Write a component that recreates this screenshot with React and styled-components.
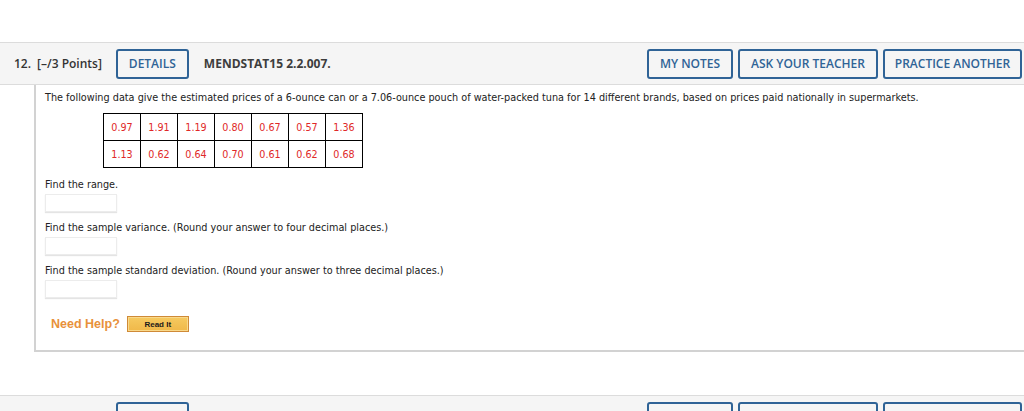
import React from "react";
import styled, { createGlobalStyle } from "styled-components";

const Global = createGlobalStyle`
  body {
    margin: 0;
    background: #fff;
    font-family: "DejaVu Sans", Verdana, sans-serif;
  }
`;

const Page = styled.div`
  width: 1024px;
  height: 411px;
  overflow: hidden;
  padding-top: 42px;
  box-sizing: border-box;
`;

const Header = styled.div`
  display: flex;
  align-items: center;
  height: 41px;
  padding: 0 2px 0 14px;
  background: #f5f5f5;
  border-top: 1px solid #dcdcdc;
  border-bottom: 1px solid #dcdcdc;
  font-family: "Open Sans", sans-serif;
  font-size: 12px;
  font-weight: 600;
  color: #333;
`;

const Num = styled.span`
  margin-right: 6px;
`;

const Points = styled.span`
  margin-right: 14px;
`;

const Code = styled.span`
  margin-left: 15px;
  color: #3d3d3d;
  font-weight: 700;
`;

const Spacer = styled.div`
  flex: 1;
`;

const Button = styled.button`
  box-sizing: border-box;
  height: 30px;
  width: ${(p) => p.$w}px;
  margin-left: ${(p) => p.$ml || 0}px;
  border: 2px solid #2f6396;
  border-radius: 3px;
  background: #f5f5f5;
  color: #2f6396;
  font-family: "Open Sans", sans-serif;
  font-size: 12px;
  font-weight: 600;
  padding: 0;
`;

const Panel = styled.div`
  margin-left: 34px;
  height: 267px;
  box-sizing: border-box;
  border-left: 2px solid #d2d2d2;
  border-bottom: 2px solid #d2d2d2;
  padding: 6px 0 0 9px;
  font-size: 9.7px;
  color: #222;
`;

const Intro = styled.p`
  margin: 0;
  line-height: 13px;
`;

const DataTable = styled.table`
  border-collapse: collapse;
  margin: 9px 0 0 58px;
  td {
    border: 1px solid #000;
    width: 36px;
    height: 26px;
    padding: 0;
    text-align: center;
    color: #e02828;
    font-size: 9.6px;
  }
`;

const Prompt = styled.p`
  margin: ${(p) => p.$mt}px 0 0 0;
  line-height: 13px;
`;

const AnswerBox = styled.div`
  box-sizing: border-box;
  width: 72px;
  height: 18px;
  margin-top: 3px;
  border: 1px solid #ececec;
  box-shadow: 0 1px 1px #e4e4e4;
  background: #fff;
`;

const Help = styled.div`
  display: flex;
  align-items: center;
  height: 16px;
  margin: 18px 0 0 6px;
`;

const HelpLabel = styled.span`
  font-family: "Liberation Sans", Arial, sans-serif;
  font-weight: 700;
  font-size: 12.5px;
  color: #e8913a;
  margin-right: 7px;
`;

const ReadIt = styled.button`
  box-sizing: border-box;
  width: 62px;
  height: 16px;
  padding: 0;
  border: 1px solid #cf8a37;
  box-shadow: inset 0 0 0 1px #f9d98b;
  background: linear-gradient(#f6ca60, #f0b849);
  font-family: "Liberation Sans", Arial, sans-serif;
  font-weight: 700;
  font-size: 8px;
  color: #1a1a1a;
`;

const Gap = styled.div`
  height: 43px;
`;

const rows = [
  ["0.97", "1.91", "1.19", "0.80", "0.67", "0.57", "1.36"],
  ["1.13", "0.62", "0.64", "0.70", "0.61", "0.62", "0.68"],
];

const QuestionHeader = () => (
  <Header>
    <Num>12.</Num>
    <Points>[–/3 Points]</Points>
    <Button $w={73}>DETAILS</Button>
    <Code>MENDSTAT15 2.2.007.</Code>
    <Spacer />
    <Button $w={86}>MY NOTES</Button>
    <Button $w={140} $ml={5}>ASK YOUR TEACHER</Button>
    <Button $w={139} $ml={5}>PRACTICE ANOTHER</Button>
  </Header>
);

export default function App() {
  return (
    <Page>
      <Global />
      <QuestionHeader />
      <Panel>
        <Intro>
          The following data give the estimated prices of a 6-ounce can or a 7.06-ounce pouch of water-packed tuna for 14 different brands, based on prices paid nationally in supermarkets.
        </Intro>
        <DataTable>
          <tbody>
            {rows.map((r, i) => (
              <tr key={i}>
                {r.map((v, j) => (
                  <td key={j}>{v}</td>
                ))}
              </tr>
            ))}
          </tbody>
        </DataTable>
        <Prompt $mt={10}>Find the range.</Prompt>
        <AnswerBox />
        <Prompt $mt={9}>Find the sample variance. (Round your answer to four decimal places.)</Prompt>
        <AnswerBox />
        <Prompt $mt={9}>Find the sample standard deviation. (Round your answer to three decimal places.)</Prompt>
        <AnswerBox />
        <Help>
          <HelpLabel>Need Help?</HelpLabel>
          <ReadIt>Read It</ReadIt>
        </Help>
      </Panel>
      <Gap />
      <QuestionHeader />
    </Page>
  );
}
